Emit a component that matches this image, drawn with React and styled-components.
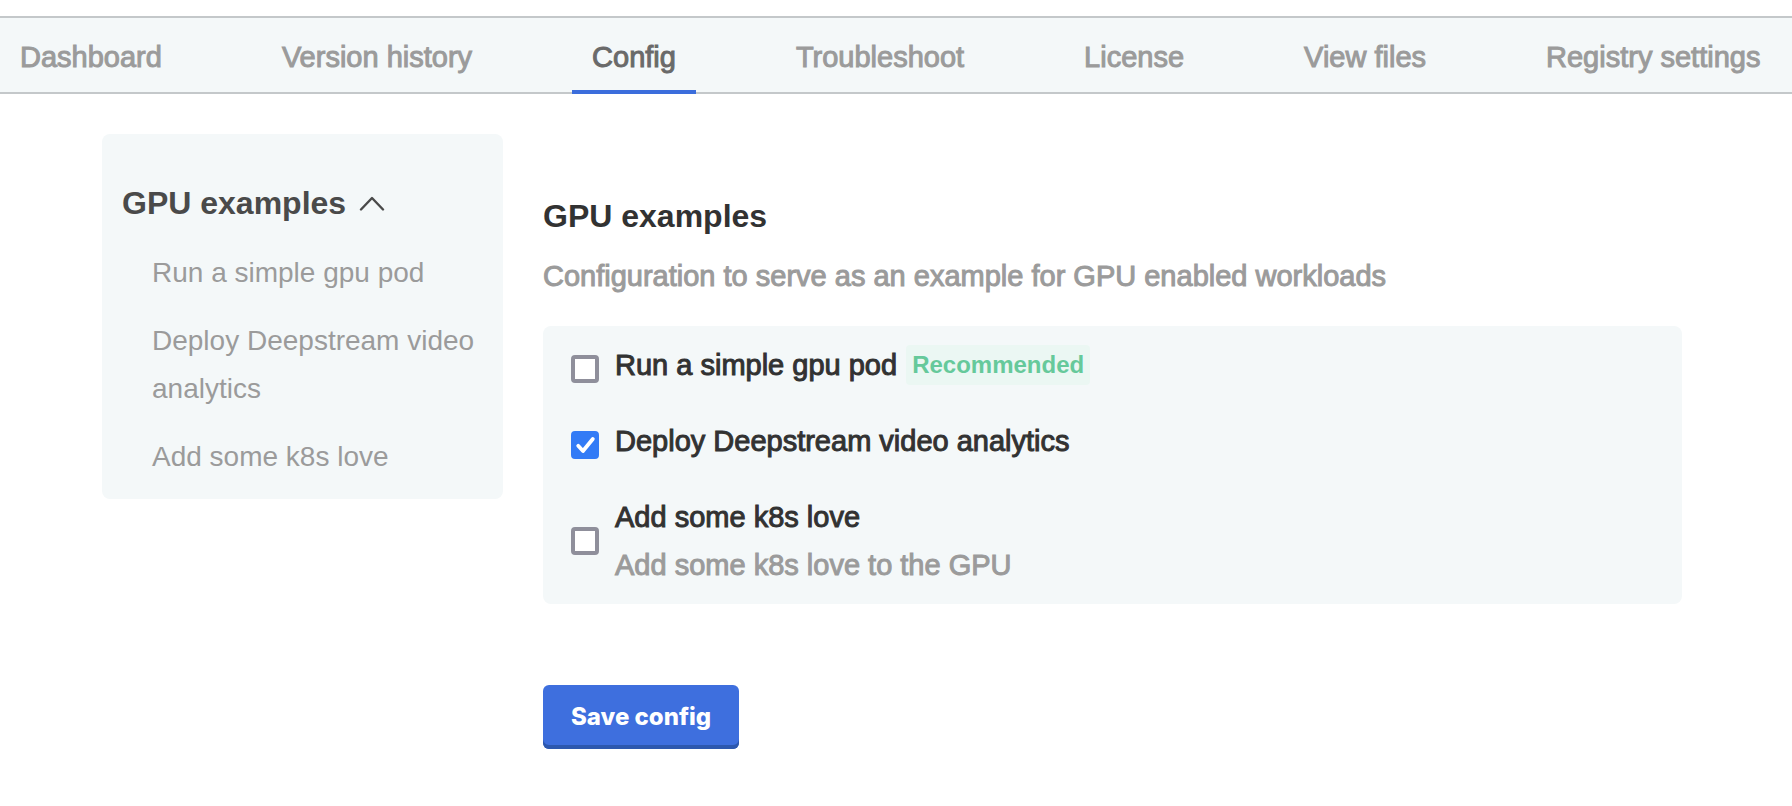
import React, { useState } from "react";
import styled, { createGlobalStyle, css } from "styled-components";

const GlobalStyle = createGlobalStyle`
  *, *::before, *::after { box-sizing: border-box; }
  body {
    margin: 0;
    background: #fff;
    color: #323232;
    font-family: "Liberation Sans", Arial, sans-serif;
    font-size: 29px;
    line-height: 48px;
  }
  h1, h2, p, ul { margin: 0; padding: 0; }
  ul { list-style: none; }
`;

/* Thickens the regular face to a medium weight. */
const medium = css`
  -webkit-text-stroke: 1px currentColor;
`;

const TabBar = styled.nav`
  display: flex;
  gap: 80px;
  height: 78px;
  margin-top: 16px;
  background: #f4f8f9;
  border-top: 2px solid #c4c8ca;
  box-shadow: inset 0 -2px #c4c8ca;
`;

const Tab = styled.a`
  ${medium}
  display: flex;
  align-items: center;
  padding: 6px 20px 0;
  border-bottom: 4px solid ${(p) => (p.$active ? "#3b6ddc" : "transparent")};
  color: ${(p) => (p.$active ? "#6a6a6a" : "#9b9b9b")};
  text-decoration: none;
  white-space: nowrap;
`;

const Page = styled.div`
  display: flex;
  align-items: flex-start;
  gap: 40px;
  padding: 40px 110px 56px 102px;
`;

const Sidebar = styled.aside`
  flex: 0 0 401px;
  padding: 45px 20px 18px;
  background: #f4f8f9;
  border-radius: 8px;
`;

const GroupToggle = styled.button`
  display: flex;
  align-items: center;
  gap: 13px;
  padding: 0;
  border: 0;
  background: none;
  color: #4a4a4a;
  font: inherit;
  font-size: 32px;
  font-weight: 700;
  cursor: pointer;
`;

const GroupList = styled.ul`
  display: flex;
  flex-direction: column;
  gap: 20px;
  margin-top: 22px;
  padding-left: 30px;
`;

const GroupLink = styled.a`
  display: block;
  color: #9b9b9b;
  font-size: 28px;
  text-decoration: none;
`;

const Main = styled.main`
  flex: 1;
  min-width: 0;
  padding-top: 58px;
`;

const Title = styled.h1`
  font-size: 32px;
  font-weight: 700;
`;

const Description = styled.p`
  ${medium}
  margin-top: 12px;
  color: #9b9b9b;
`;

const OptionCard = styled.section`
  display: flex;
  flex-direction: column;
  gap: 28px;
  margin-top: 26px;
  padding: 15px 28px;
  background: #f4f8f9;
  border-radius: 8px;
`;

const OptionRow = styled.div`
  display: flex;
  align-items: ${(p) => (p.$centered ? "center" : "flex-start")};
  gap: 16px;
`;

const Box = styled.span`
  display: grid;
  flex: none;
  margin-top: ${(p) => (p.$centered ? "0" : "14px")};
  > * { grid-area: 1 / 1; }
`;

const BoxInput = styled.input`
  appearance: none;
  width: 28px;
  height: 28px;
  margin: 0;
  border: 4px solid #8f8f9b;
  border-radius: 4px;
  background: #fff;
  cursor: pointer;
  &:checked {
    border-color: #327bf6;
    background: #327bf6;
  }
`;

const Tick = styled.svg`
  pointer-events: none;
`;

const OptionText = styled.div`
  ${medium}
`;

const OptionHint = styled.p`
  color: #9b9b9b;
`;

const Tag = styled.span`
  margin-left: 9px;
  padding: 0 6px;
  border-radius: 4px;
  background: #ebf7f3;
  color: #66c99b;
  font-size: 24px;
  font-weight: 700;
  line-height: 40px;
  -webkit-text-stroke: 0;
`;

const OptionLine = styled.div`
  display: flex;
  align-items: center;
`;

const SaveButton = styled.button`
  margin-top: 81px;
  height: 64px;
  padding: 0 28px;
  border: 0;
  border-radius: 6px;
  background: #3e6fde;
  box-shadow: inset 0 -4px #2d58ae;
  color: #fff;
  font-family: Inter, sans-serif;
  font-size: 24px;
  font-weight: 800;
  line-height: 32px;
  cursor: pointer;
`;

const tabs = [
  "Dashboard",
  "Version history",
  "Config",
  "Troubleshoot",
  "License",
  "View files",
  "Registry settings",
];

const options = [
  { id: "gpu-pod", label: "Run a simple gpu pod", tag: "Recommended" },
  { id: "deepstream", label: "Deploy Deepstream video analytics" },
  { id: "k8s-love", label: "Add some k8s love", hint: "Add some k8s love to the GPU" },
];

function Chevron({ open }) {
  return (
    <svg width="26" height="16" viewBox="0 0 26 16" fill="none" aria-hidden="true">
      <path
        d={open ? "M2 14.5 13 3 24 14.5" : "M2 3 13 14.5 24 3"}
        stroke="#4a4a4a"
        strokeWidth="2.4"
        strokeLinecap="round"
        strokeLinejoin="round"
      />
    </svg>
  );
}

function Option({ option, checked, onChange }) {
  const centered = Boolean(option.hint);
  return (
    <OptionRow $centered={centered}>
      <Box $centered={centered}>
        <BoxInput type="checkbox" id={option.id} checked={checked} onChange={onChange} />
        {checked && (
          <Tick width="28" height="28" viewBox="0 0 28 28" fill="none" aria-hidden="true">
            <path
              d="M7.2 14.8 12 20 21.8 8"
              stroke="#fff"
              strokeWidth="3.8"
              strokeLinecap="round"
              strokeLinejoin="round"
            />
          </Tick>
        )}
      </Box>
      <OptionText>
        <OptionLine>
          <label htmlFor={option.id}>{option.label}</label>
          {option.tag && <Tag>{option.tag}</Tag>}
        </OptionLine>
        {option.hint && <OptionHint>{option.hint}</OptionHint>}
      </OptionText>
    </OptionRow>
  );
}

export default function App() {
  const [open, setOpen] = useState(true);
  const [selected, setSelected] = useState({ deepstream: true });
  const toggle = (id) => setSelected((s) => ({ ...s, [id]: !s[id] }));

  return (
    <>
      <GlobalStyle />
      <TabBar>
        {tabs.map((name) => (
          <Tab key={name} href="#" $active={name === "Config"}>
            {name}
          </Tab>
        ))}
      </TabBar>
      <Page>
        <Sidebar>
          <GroupToggle type="button" aria-expanded={open} onClick={() => setOpen(!open)}>
            GPU examples
            <Chevron open={open} />
          </GroupToggle>
          {open && (
            <GroupList>
              {options.map((o) => (
                <li key={o.id}>
                  <GroupLink href={`#${o.id}`}>{o.label}</GroupLink>
                </li>
              ))}
            </GroupList>
          )}
        </Sidebar>
        <Main>
          <Title>GPU examples</Title>
          <Description>Configuration to serve as an example for GPU enabled workloads</Description>
          <OptionCard>
            {options.map((o) => (
              <Option
                key={o.id}
                option={o}
                checked={Boolean(selected[o.id])}
                onChange={() => toggle(o.id)}
              />
            ))}
          </OptionCard>
          <SaveButton type="button">Save config</SaveButton>
        </Main>
      </Page>
    </>
  );
}
